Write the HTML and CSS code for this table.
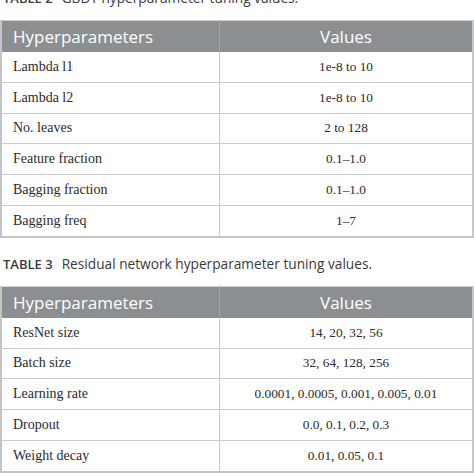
FILE: index.html
```html
<!DOCTYPE html>
<html>
<head>
<meta charset="utf-8">
<link rel="stylesheet" href="styles.css">
</head>
<body>
<div class="page">
  <p class="caption first"><span class="label">TABLE 2</span>GBDT hyperparameter tuning values.</p>
  <table class="tbl t1">
    <thead>
      <tr><th class="c1">Hyperparameters</th><th class="c2">Values</th></tr>
    </thead>
    <tbody>
      <tr><td class="c1">Lambda l1</td><td class="c2">1e-8 to 10</td></tr>
      <tr><td class="c1">Lambda l2</td><td class="c2">1e-8 to 10</td></tr>
      <tr><td class="c1">No. leaves</td><td class="c2">2 to 128</td></tr>
      <tr><td class="c1">Feature fraction</td><td class="c2">0.1–1.0</td></tr>
      <tr><td class="c1">Bagging fraction</td><td class="c2">0.1–1.0</td></tr>
      <tr><td class="c1">Bagging freq</td><td class="c2">1–7</td></tr>
    </tbody>
  </table>
  <p class="caption"><span class="label">TABLE 3</span>Residual network hyperparameter tuning values.</p>
  <table class="tbl t2">
    <thead>
      <tr><th class="c1">Hyperparameters</th><th class="c2">Values</th></tr>
    </thead>
    <tbody>
      <tr><td class="c1">ResNet size</td><td class="c2">14, 20, 32, 56</td></tr>
      <tr><td class="c1">Batch size</td><td class="c2">32, 64, 128, 256</td></tr>
      <tr><td class="c1">Learning rate</td><td class="c2">0.0001, 0.0005, 0.001, 0.005, 0.01</td></tr>
      <tr><td class="c1">Dropout</td><td class="c2">0.0, 0.1, 0.2, 0.3</td></tr>
      <tr><td class="c1">Weight decay</td><td class="c2">0.01, 0.05, 0.1</td></tr>
    </tbody>
  </table>
</div>
</body>
</html>
```

FILE: styles.css
```css
html, body {
  margin: 0;
  padding: 0;
  background: #ffffff;
  overflow: hidden;
}
.page {
  width: 474px;
}
.caption {
  margin: 17px 0 13px 3px;
  height: 18px;
  line-height: 18px;
  font-family: "Open Sans", "Liberation Sans", sans-serif;
  font-size: 13.7px;
  color: #3a3a3a;
  white-space: nowrap;
}
.caption.first {
  margin-top: -11px;
}
.caption .label {
  font-size: 13px;
  font-weight: 600;
  margin-right: 9px;
}
.tbl {
  width: 474px;
  border-collapse: collapse;
  table-layout: fixed;
  border-left: 2px solid #c2c4c5;
  border-right: 2px solid #c8c8c8;
  border-bottom: 2px solid #c4c4c4;
  border-top: 1px solid #cfd1d2;
}
.tbl .c1 {
  width: 206px;
  text-align: left;
  padding: 0 0 0 11px;
}
.tbl .c2 {
  text-align: center;
  padding: 0;
}
.tbl th {
  height: 31px;
  background: #8b8f91;
  color: #ffffff;
  font-family: "Open Sans", "Liberation Sans", sans-serif;
  font-weight: 400;
  font-size: 17px;
  line-height: 31px;
}
.tbl th.c1 {
  border-right: 1px solid #a4a7a9;
}
.tbl td {
  height: 29.8px;
  font-family: "Liberation Serif", "Times New Roman", serif;
  font-size: 13.3px;
  color: #2b2b2b;
  border-bottom: 1px solid #cbcbcb;
  line-height: 16px;
}
.tbl td.c1 {
  font-size: 14px;
  border-right: 1px solid #c6c6c6;
}
.tbl tr:last-child td {
  border-bottom: none;
}
```
